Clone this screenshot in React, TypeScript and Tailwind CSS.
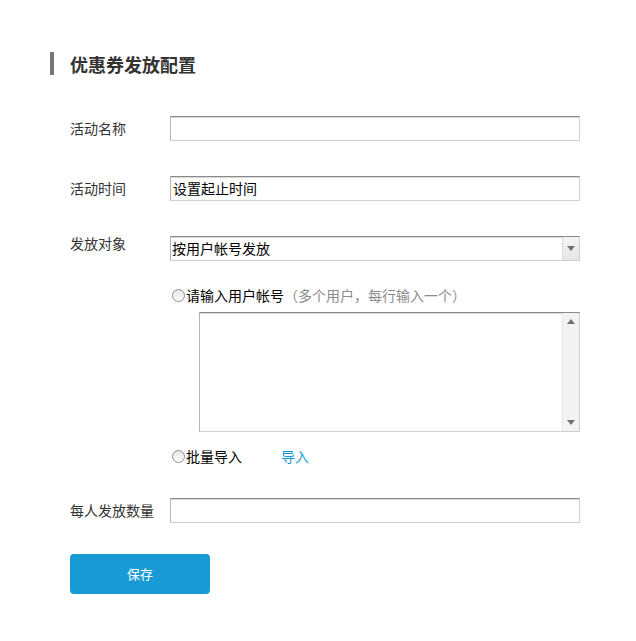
import React from "react";

const font = { fontFamily: '"Microsoft YaHei", "Noto Sans CJK SC", "Noto Sans", sans-serif' };

// classic IE-style sunken border: dark top edge, light sides
const fieldBorder =
  "border border-[#cfcfcf] border-t-[#8a8a8a] border-l-[#b5b5b5] shadow-[inset_0_1px_0_#d8d8d8]";

function Radio() {
  return (
    <span className="inline-block w-[13px] h-[13px] rounded-full border border-[#8d8d8d] bg-gradient-to-b from-[#e6e6e6] to-white mr-[1px]" />
  );
}

function Triangle({ up }: { up?: boolean }) {
  return up ? (
    <span className="block w-0 h-0 border-l-[4px] border-r-[4px] border-b-[5px] border-l-transparent border-r-transparent border-b-[#707070]" />
  ) : (
    <span className="block w-0 h-0 border-l-[4px] border-r-[4px] border-t-[5px] border-l-transparent border-r-transparent border-t-[#707070]" />
  );
}

export default function App() {
  return (
    <div className="w-[636px] h-[641px] bg-white text-[14px] text-[#333]" style={font}>
      <div className="pt-[52px] pl-[50px]">
        {/* title */}
        <div className="flex items-center h-[23px]">
          <span className="w-[4px] h-[23px] bg-[#777]" />
          <h1 className="ml-[16px] text-[18px] font-bold leading-none text-[#333]">优惠券发放配置</h1>
        </div>

        <div className="pl-[20px] mt-[41px] flex flex-col">
          {/* name */}
          <div className="flex items-center h-[25px]">
            <span className="w-[100px]">活动名称</span>
            <div className={`w-[410px] h-[25px] ${fieldBorder}`} />
          </div>

          {/* time */}
          <div className="flex items-center h-[25px] mt-[35px]">
            <span className="w-[100px]">活动时间</span>
            <div className={`w-[410px] h-[25px] ${fieldBorder} flex items-center pl-[2px] text-black`}>
              设置起止时间
            </div>
          </div>

          {/* target */}
          <div className="flex mt-[35px]">
            <span className="w-[100px] leading-[15px]">发放对象</span>
            <div className="flex flex-col">
              <div className={`w-[410px] h-[25px] ${fieldBorder} flex items-center text-black`}>
                <span className="flex-1 pl-[1px]">按用户帐号发放</span>
                <span className="w-[17px] h-full bg-gradient-to-b from-[#f4f4f4] to-[#e6e6e6] border-l border-[#dcdcdc] flex items-center justify-center">
                  <Triangle />
                </span>
              </div>

              <div className="flex items-center mt-[26px] ml-[2px] h-[16px]">
                <Radio />
                <span className="text-black">请输入用户帐号</span>
                <span className="text-[#8c8c8c]">（多个用户，每行输入一个）</span>
              </div>

              <div className={`ml-[29px] mt-[9px] w-[381px] h-[120px] ${fieldBorder} flex`}>
                <div className="flex-1" />
                <div className="w-[17px] h-full bg-[#f3f3f3] border-l border-[#e6e6e6] flex flex-col items-center justify-between py-[6px]">
                  <Triangle up />
                  <Triangle />
                </div>
              </div>

              <div className="flex items-center mt-[16px] ml-[2px] h-[16px]">
                <Radio />
                <span className="text-black">批量导入</span>
                <span className="ml-[39px] text-[#1a9ad6]">导入</span>
              </div>
            </div>
          </div>

          {/* amount */}
          <div className="flex items-center h-[25px] mt-[34px]">
            <span className="w-[100px]">每人发放数量</span>
            <div className={`w-[410px] h-[25px] ${fieldBorder}`} />
          </div>

          <button className="mt-[31px] w-[140px] h-[40px] rounded-[4px] bg-[#189bd5] text-white text-[13px]">
            保存
          </button>
        </div>
      </div>
    </div>
  );
}
